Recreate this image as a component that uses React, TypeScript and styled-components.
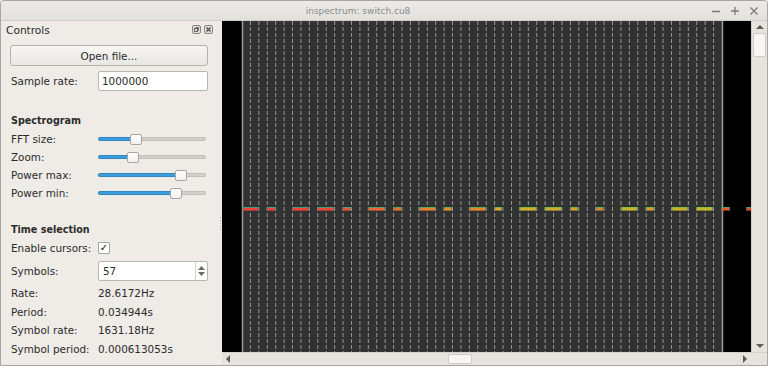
import React from 'react';
import styled, { createGlobalStyle } from 'styled-components';

const GlobalStyle = createGlobalStyle`
  html, body {
    margin: 0;
    padding: 0;
    width: 768px;
    height: 366px;
    overflow: hidden;
    background: #efebe7;
  }
  * { box-sizing: border-box; }
`;

const Window = styled.div`
  width: 768px;
  height: 366px;
  display: flex;
  flex-direction: column;
  border: 1px solid #a8a6a3;
  border-radius: 4px 4px 0 0;
  background: #efebe7;
  font-family: "DejaVu Sans", sans-serif;
  font-size: 10.4px;
  color: #2b2b2b;
  overflow: hidden;
`;

const TitleBar = styled.div`
  height: 20px;
  display: flex;
  align-items: center;
  background: linear-gradient(#eceae7, #e3e1de);
  border-bottom: 1px solid #cfccc8;
`;

const TitleText = styled.div`
  flex: 1;
  text-align: center;
  padding-left: 8px;
  font-size: 9px;
  color: #8b8b8b;
`;

const TitleButtons = styled.div`
  display: flex;
  gap: 1px;
  padding-right: 4px;
`;

const TitleButton = styled.div`
  width: 18px;
  height: 18px;
  display: flex;
  align-items: center;
  justify-content: center;
`;

const Body = styled.div`
  flex: 1;
  display: flex;
  min-height: 0;
`;

const Dock = styled.div`
  width: 218px;
  display: flex;
  flex-direction: column;
`;

const DockHeader = styled.div`
  height: 17px;
  display: flex;
  align-items: center;
  justify-content: space-between;
  padding: 0 6px 0 5px;
  font-size: 10.6px;
`;

const DockButtons = styled.div`
  display: flex;
  gap: 3px;
`;

const Form = styled.div`
  display: flex;
  flex-direction: column;
  padding: 7px 11px 0 9px;
`;

const PushButton = styled.div`
  height: 21px;
  display: flex;
  align-items: center;
  justify-content: center;
  border: 1px solid #b5b2ae;
  border-radius: 3px;
  background: linear-gradient(#f7f6f5, #e9e7e4);
`;

const Row = styled.div<{ $h: number; $mt?: number }>`
  height: ${p => p.$h}px;
  margin-top: ${p => p.$mt ?? 0}px;
  display: grid;
  grid-template-columns: 88px 1fr;
  align-items: center;
`;

const Label = styled.div`
  padding-left: 1px;
  white-space: nowrap;
`;

const Value = styled.div`
  white-space: nowrap;
`;

const TextField = styled.div`
  height: 20px;
  display: flex;
  align-items: center;
  padding-left: 3px;
  background: #fff;
  border: 1px solid #bab7b3;
  border-radius: 2px;
`;

const SectionTitle = styled.div<{ $mt: number }>`
  margin-top: ${p => p.$mt}px;
  height: 14px;
  line-height: 14px;
  padding-left: 1px;
  font-weight: bold;
  font-size: 9.6px;
`;

const SliderTrack = styled.div`
  position: relative;
  height: 11px;
  width: 108px;
`;

const Groove = styled.div`
  position: absolute;
  left: 0;
  right: 0;
  top: 3.5px;
  height: 4px;
  border-radius: 2px;
  background: #d3d0cc;
  border: 1px solid #c2bfbb;
`;

const GrooveFill = styled.div`
  position: absolute;
  left: 0;
  top: 3.5px;
  height: 4px;
  border-radius: 2px;
  background: #3c9fdc;
  border: 1px solid #2e88c4;
`;

const Thumb = styled.div`
  position: absolute;
  top: 0;
  width: 12px;
  height: 11px;
  border-radius: 2px;
  background: linear-gradient(#ffffff, #f1f0ee);
  border: 1px solid #a9a6a2;
`;

const CheckBox = styled.div`
  width: 12px;
  height: 12px;
  display: flex;
  align-items: center;
  justify-content: center;
  background: #fff;
  border: 1px solid #a9a6a2;
  border-radius: 1px;
  font-size: 10px;
  line-height: 1;
  color: #111;
`;

const SpinBox = styled.div`
  height: 20px;
  display: flex;
  background: #fff;
  border: 1px solid #bab7b3;
  border-radius: 2px;
`;

const SpinText = styled.div`
  flex: 1;
  display: flex;
  align-items: center;
  padding-left: 4px;
`;

const SpinArrows = styled.div`
  width: 12px;
  display: flex;
  flex-direction: column;
  align-items: center;
  justify-content: center;
  gap: 2px;
  border-left: 1px solid #d6d3cf;
`;

const Splitter = styled.div`
  width: 3px;
  display: flex;
  flex-direction: column;
  justify-content: center;
  align-items: center;
  gap: 2px;
  padding-top: 60px;
`;

const Dot = styled.div`
  width: 1px;
  height: 1px;
  background: #b0ada9;
`;

const View = styled.div`
  flex: 1;
  display: flex;
  flex-direction: column;
  min-width: 0;
`;

const ViewRow = styled.div`
  flex: 1;
  display: flex;
  min-height: 0;
`;

const Canvas = styled.svg`
  flex: 1;
  display: block;
  height: 100%;
  background: #000;
`;

const VScroll = styled.div`
  width: 16px;
  display: flex;
  flex-direction: column;
  background: #e6e3df;
  border-left: 1px solid #d3d0cc;
`;

const HScroll = styled.div`
  height: 13px;
  display: flex;
  align-items: stretch;
  background: #e6e3df;
  border-top: 1px solid #d3d0cc;
`;

const ArrowBox = styled.div<{ $size: number }>`
  flex: 0 0 ${p => p.$size}px;
  display: flex;
  align-items: center;
  justify-content: center;
`;

const VHandle = styled.div`
  height: 24px;
  margin: 0 1px;
  background: #f7f6f5;
  border: 1px solid #cfccc8;
  border-radius: 2px;
`;

const HTrack = styled.div`
  flex: 1;
  display: flex;
  align-items: stretch;
  padding: 1px 0;
`;

const HHandle = styled.div`
  width: 24px;
  background: #f7f6f5;
  border: 1px solid #cfccc8;
  border-radius: 2px;
`;

const Corner = styled.div`
  width: 16px;
  background: #e6e3df;
`;

const Spacer = styled.div<{ $grow?: number }>`
  flex: ${p => p.$grow ?? 1};
`;

const Tri = ({ dir }: { dir: 'up' | 'down' | 'left' | 'right' }) => {
  const pts = {
    up: '0,5 4,1 8,5',
    down: '0,1 4,5 8,1',
    left: '5,0 1,4 5,8',
    right: '1,0 5,4 1,8',
  }[dir];
  const vertical = dir === 'up' || dir === 'down';
  return (
    <svg width={vertical ? 8 : 6} height={vertical ? 6 : 8}>
      <polygon points={pts} fill="#5c5a57" />
    </svg>
  );
};

const Slider = ({ value }: { value: number }) => {
  const left = value * 96;
  return (
    <SliderTrack>
      <Groove />
      <GrooveFill style={{ width: left + 6 }} />
      <Thumb style={{ left }} />
    </SliderTrack>
  );
};

const FloatIcon = () => (
  <svg width="9" height="9" viewBox="0 0 9 9">
    <rect x="0.5" y="0.5" width="8" height="8" rx="1.5" fill="#e2dfdb" stroke="#8a8784" />
    <rect x="2.5" y="3.5" width="3" height="3" fill="none" stroke="#6a6764" />
    <path d="M3.5 2.5h3v3" fill="none" stroke="#6a6764" />
  </svg>
);

const CloseIcon = () => (
  <svg width="9" height="9" viewBox="0 0 9 9">
    <rect x="0.5" y="0.5" width="8" height="8" rx="1.5" fill="#e2dfdb" stroke="#8a8784" />
    <path d="M2.5 2.5l4 4M6.5 2.5l-4 4" stroke="#4a4744" strokeWidth="1.2" />
  </svg>
);

// [start x, end x, core colour, top edge colour]
const segments: [number, number, string, string][] = [
  [241.7, 257.7, '#f0403a', '#4c9a78'],
  [265.7, 274.3, '#f0423a', '#4c9a78'],
  [291, 307.7, '#ee4438', '#4c9a78'],
  [316, 333, '#ee4838', '#4f9c72'],
  [341.7, 350, '#ec5236', '#52a06c'],
  [367, 384.3, '#ea6432', '#58a266'],
  [392.3, 400.7, '#e87030', '#5ca460'],
  [418, 435, '#e6822e', '#62a65a'],
  [442.7, 451, '#e2922e', '#6aa852'],
  [468.3, 485, '#e6862e', '#66a856'],
  [493.3, 501, '#d8aa2e', '#78b046'],
  [518.3, 535.7, '#ccb42e', '#86b83e'],
  [543.7, 561, '#ccb02e', '#86b83e'],
  [569, 577.3, '#d8a02e', '#78b046'],
  [594.7, 602.3, '#e2882e', '#6aa852'],
  [620, 636.7, '#c4b42e', '#8cbc3c'],
  [644.7, 653.3, '#d6a02e', '#80b442'],
  [670.3, 687, '#c8b02e', '#8cbc3c'],
  [695, 712, '#c4b42e', '#8cbc3c'],
  [720, 728.7, '#e25a2c', '#5aa060'],
  [745.3, 752, '#e8442a', '#4c9a70'],
];

const Spectrogram = () => {
  const ox = 221;
  const x0 = 20;
  const x1 = 500;
  const lines = Array.from({ length: 56 }, (_, i) => x0 + ((i + 1) * (x1 - x0)) / 57);
  return (
    <Canvas>
      <rect x={x0} y={0} width={x1 - x0} height="100%" fill="#323232" />
      {lines.map((x, i) => (
        <line key={i} x1={x} x2={x} y1={0} y2="100%" stroke="#969696" strokeDasharray="4 2" />
      ))}
      <line x1={x0 + 0.5} x2={x0 + 0.5} y1={0} y2="100%" stroke="#9a9a9a" strokeWidth="1.5" />
      <line x1={x1 + 0.5} x2={x1 + 0.5} y1={0} y2="100%" stroke="#9a9a9a" strokeWidth="1.5" />
      {segments.map(([a, b, c, e], i) => (
        <g key={i}>
          <rect x={a - ox} y={186} width={b - a} height={1} fill={e} />
          <rect x={a - ox} y={187} width={b - a} height={2} fill={c} />
          <rect x={a - ox} y={189} width={b - a} height={1} fill={c} opacity="0.55" />
          <rect x={a - ox} y={186} width={1} height={4} fill="#3f8a70" opacity="0.7" />
          <rect x={b - ox - 1} y={186} width={1} height={4} fill="#3f8a70" opacity="0.7" />
        </g>
      ))}
    </Canvas>
  );
};

const App = () => (
  <>
    <GlobalStyle />
    <Window>
      <TitleBar>
        <TitleText>inspectrum: switch.cu8</TitleText>
        <TitleButtons>
          <TitleButton>
            <svg width="10" height="10"><path d="M1 5.5h8" stroke="#7a7a7a" strokeWidth="1.3" /></svg>
          </TitleButton>
          <TitleButton>
            <svg width="10" height="10"><path d="M1 5h8M5 1v8" stroke="#7a7a7a" strokeWidth="1.3" /></svg>
          </TitleButton>
          <TitleButton>
            <svg width="10" height="10"><path d="M1.5 1.5l7 7M8.5 1.5l-7 7" stroke="#7a7a7a" strokeWidth="1.3" /></svg>
          </TitleButton>
        </TitleButtons>
      </TitleBar>
      <Body>
        <Dock>
          <DockHeader>
            <span>Controls</span>
            <DockButtons>
              <FloatIcon />
              <CloseIcon />
            </DockButtons>
          </DockHeader>
          <Form>
            <PushButton>Open file...</PushButton>
            <Row $h={20} $mt={5}>
              <Label>Sample rate:</Label>
              <TextField>1000000</TextField>
            </Row>
            <SectionTitle $mt={23}>Spectrogram</SectionTitle>
            <Row $h={18} $mt={2}>
              <Label>FFT size:</Label>
              <Slider value={0.333} />
            </Row>
            <Row $h={18}>
              <Label>Zoom:</Label>
              <Slider value={0.302} />
            </Row>
            <Row $h={18}>
              <Label>Power max:</Label>
              <Slider value={0.797} />
            </Row>
            <Row $h={18}>
              <Label>Power min:</Label>
              <Slider value={0.75} />
            </Row>
            <SectionTitle $mt={21}>Time selection</SectionTitle>
            <Row $h={18} $mt={2}>
              <Label>Enable cursors:</Label>
              <CheckBox>✓</CheckBox>
            </Row>
            <Row $h={20} $mt={4}>
              <Label>Symbols:</Label>
              <SpinBox>
                <SpinText>57</SpinText>
                <SpinArrows>
                  <svg width="7" height="4"><polygon points="0,4 3.5,0 7,4" fill="#6a6764" /></svg>
                  <svg width="7" height="4"><polygon points="0,0 3.5,4 7,0" fill="#6a6764" /></svg>
                </SpinArrows>
              </SpinBox>
            </Row>
            <Row $h={18.5} $mt={3}>
              <Label>Rate:</Label>
              <Value>28.6172Hz</Value>
            </Row>
            <Row $h={18.5}>
              <Label>Period:</Label>
              <Value>0.034944s</Value>
            </Row>
            <Row $h={18.5}>
              <Label>Symbol rate:</Label>
              <Value>1631.18Hz</Value>
            </Row>
            <Row $h={18.5}>
              <Label>Symbol period:</Label>
              <Value>0.000613053s</Value>
            </Row>
          </Form>
        </Dock>
        <Splitter>
          <Dot />
          <Dot />
          <Dot />
          <Dot />
          <Dot />
        </Splitter>
        <View>
          <ViewRow>
            <Spectrogram />
            <VScroll>
              <ArrowBox $size={12}><Tri dir="up" /></ArrowBox>
              <VHandle />
              <Spacer />
              <ArrowBox $size={13}><Tri dir="down" /></ArrowBox>
            </VScroll>
          </ViewRow>
          <HScroll>
            <ArrowBox $size={12}><Tri dir="left" /></ArrowBox>
            <HTrack>
              <Spacer />
              <HHandle />
              <Spacer $grow={1.25} />
            </HTrack>
            <ArrowBox $size={12}><Tri dir="right" /></ArrowBox>
            <Corner />
          </HScroll>
        </View>
      </Body>
    </Window>
  </>
);

export default App;
